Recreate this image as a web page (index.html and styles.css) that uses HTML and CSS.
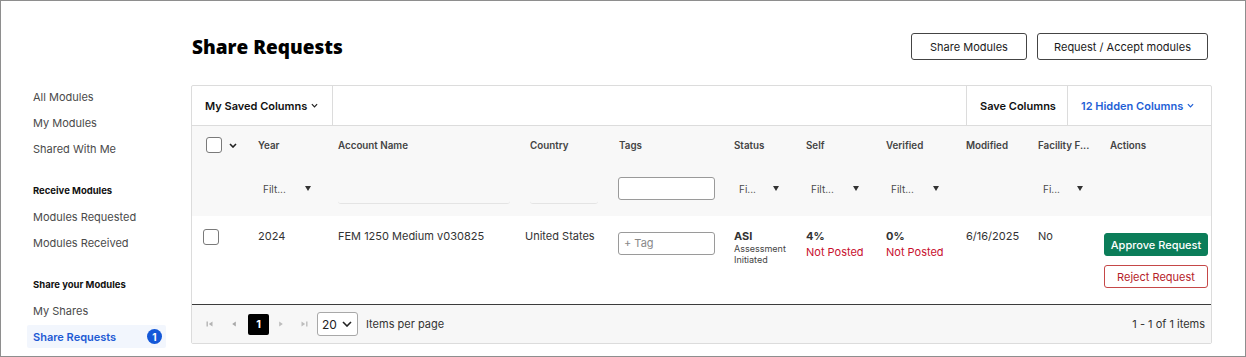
FILE: index.html
```html
<!DOCTYPE html>
<html lang="en">
<head>
<meta charset="utf-8">
<title>Share Requests</title>
<link rel="stylesheet" href="styles.css">
</head>
<body>
<div class="frame">
  <aside class="sidebar">
    <a class="nav-item">All Modules</a>
    <a class="nav-item">My Modules</a>
    <a class="nav-item">Shared With Me</a>
    <div class="nav-heading">Receive Modules</div>
    <a class="nav-item">Modules Requested</a>
    <a class="nav-item">Modules Received</a>
    <div class="nav-heading">Share your Modules</div>
    <a class="nav-item">My Shares</a>
    <a class="nav-item active">Share Requests <span class="badge">1</span></a>
  </aside>

  <main class="main">
    <header class="page-header">
      <h1 class="page-title">Share Requests</h1>
      <div class="header-actions">
        <button class="btn-outline btn-share">Share Modules</button>
        <button class="btn-outline btn-request">Request / Accept modules</button>
      </div>
    </header>

    <section class="grid-card">
      <div class="toolbar">
        <div class="tb-cell tb-saved">My Saved Columns
          <svg class="chev" viewBox="0 0 8 5" width="7" height="5"><path d="M1 1 L4 4 L7 1" fill="none" stroke="#222" stroke-width="1.4"/></svg>
        </div>
        <div class="tb-spacer"></div>
        <div class="tb-cell tb-save">Save Columns</div>
        <div class="tb-cell tb-hidden">12 Hidden Columns
          <svg class="chev" viewBox="0 0 8 5" width="7" height="5"><path d="M1 1 L4 4 L7 1" fill="none" stroke="#1f5fd6" stroke-width="1.4"/></svg>
        </div>
      </div>

      <table class="grid">
        <colgroup>
          <col class="c-sel"><col class="c-year"><col class="c-acct"><col class="c-country"><col class="c-tags"><col class="c-status"><col class="c-self"><col class="c-ver"><col class="c-mod"><col class="c-fac"><col class="c-act">
        </colgroup>
        <thead>
          <tr class="head-row">
            <th class="sel-head"><span class="checkbox"></span><svg class="chev sel-chev" viewBox="0 0 8 5" width="8" height="5"><path d="M1 1 L4 4 L7 1" fill="none" stroke="#222" stroke-width="1.6"/></svg></th>
            <th>Year</th>
            <th>Account Name</th>
            <th>Country</th>
            <th>Tags</th>
            <th>Status</th>
            <th>Self</th>
            <th>Verified</th>
            <th>Modified</th>
            <th>Facility F...</th>
            <th>Actions</th>
          </tr>
          <tr class="filter-row">
            <th></th>
            <th><div class="dd">Filt...<span class="tri"></span></div></th>
            <th><div class="line-input acct-input"></div></th>
            <th><div class="line-input country-input"></div></th>
            <th><div class="box-input tags-filter"></div></th>
            <th><div class="dd">Fi...<span class="tri"></span></div></th>
            <th><div class="dd">Filt...<span class="tri"></span></div></th>
            <th><div class="dd">Filt...<span class="tri"></span></div></th>
            <th></th>
            <th><div class="dd">Fi...<span class="tri"></span></div></th>
            <th></th>
          </tr>
        </thead>
        <tbody>
          <tr class="data-row">
            <td class="sel-cell"><span class="checkbox"></span></td>
            <td>2024</td>
            <td>FEM 1250 Medium v030825</td>
            <td class="country-cell">United States</td>
            <td class="tags-cell"><div class="box-input tag-entry">+ Tag</div></td>
            <td><div class="status-code">ASI</div><div class="status-desc">Assessment<br>Initiated</div></td>
            <td><div class="pct">4%</div><div class="not-posted">Not Posted</div></td>
            <td><div class="pct">0%</div><div class="not-posted">Not Posted</div></td>
            <td>6/16/2025</td>
            <td>No</td>
            <td class="act-cell">
              <button class="btn-approve">Approve Request</button>
              <button class="btn-reject">Reject Request</button>
            </td>
          </tr>
        </tbody>
      </table>

      <div class="pager">
        <span class="pg-btn"><svg viewBox="0 0 8 8" width="8" height="8"><rect x="0.5" y="1.5" width="1.4" height="5" fill="#b4b4b4"/><path d="M6.5 1.5 L2.8 4 L6.5 6.5 Z" fill="#b4b4b4"/></svg></span>
        <span class="pg-btn"><svg viewBox="0 0 8 8" width="8" height="8"><path d="M5.8 1.5 L2.2 4 L5.8 6.5 Z" fill="#a8a8a8"/></svg></span>
        <span class="pg-current">1</span>
        <span class="pg-btn"><svg viewBox="0 0 8 8" width="8" height="8"><path d="M2.2 1.5 L5.8 4 L2.2 6.5 Z" fill="#bdbdbd"/></svg></span>
        <span class="pg-btn pg-last"><svg viewBox="0 0 8 8" width="8" height="8"><path d="M1.5 1.5 L5.2 4 L1.5 6.5 Z" fill="#bdbdbd"/><rect x="6.1" y="1.5" width="1.4" height="5" fill="#bdbdbd"/></svg></span>
        <span class="pg-size">20 <svg viewBox="0 0 10 6" width="10" height="6"><path d="M1 1 L5 5 L9 1" fill="none" stroke="#222" stroke-width="1.6"/></svg></span>
        <span class="pg-label">Items per page</span>
        <span class="pg-info">1 - 1 of 1 items</span>
      </div>
    </section>
  </main>
</div>
</body>
</html>
```

FILE: styles.css
```css
* { box-sizing: border-box; }
html, body { margin: 0; padding: 0; background: #fff; }
body {
  font-family: Inter, "Liberation Sans", Arial, sans-serif;
  color: #333;
  font-size: 11px;
}
button { font-family: inherit; cursor: pointer; }

.frame {
  width: 1246px;
  height: 357px;
  border: 1px solid #8e8e8e;
  display: grid;
  grid-template-columns: 190px 1fr;
  overflow: hidden;
}

/* Sidebar */
.sidebar {
  display: flex;
  flex-direction: column;
  padding: 84px 0 0 26px;
}
.nav-item {
  display: flex;
  align-items: center;
  justify-content: space-between;
  width: 139px;
  height: 23px;
  margin-bottom: 3px;
  padding: 0 6px;
  font-size: 11px;
  color: #4a4a4a;
  border-radius: 2px;
}
.nav-item.active {
  background: #f2f6fd;
  color: #1d5ad4;
  font-weight: 600;
}
.badge {
  width: 15px;
  height: 15px;
  border-radius: 50%;
  background: #1458d8;
  color: #fff;
  font-size: 10px;
  font-weight: 700;
  display: flex;
  align-items: center;
  justify-content: center;
  margin-right: -2px;
}
.nav-heading {
  height: 16px;
  line-height: 16px;
  padding-left: 6px;
  font-size: 9.5px;
  font-weight: 700;
  color: #111;
  margin: 19px 0 6px;
}
.nav-item + .nav-item + .nav-heading { margin-top: 20px; }

/* Main */
.main {
  padding: 32px 33px 0 0;
  display: flex;
  flex-direction: column;
}
.page-header {
  display: flex;
  align-items: center;
  justify-content: space-between;
  height: 27px;
  margin-bottom: 25px;
  padding-right: 4px;
}
.page-title {
  margin: 0 0 0 1px;
  font-family: "Open Sans", Lato, sans-serif;
  font-weight: 800;
  font-size: 19px;
  color: #000;
}
.header-actions { display: flex; gap: 10px; }
.btn-outline {
  height: 27px;
  border: 1px solid #444;
  border-radius: 3px;
  background: #fff;
  color: #1a1a1a;
  font-size: 11px;
  padding: 0;
}
.btn-share { width: 116px; }
.btn-request { width: 171px; }

/* Card */
.grid-card {
  border: 1px solid #dcdcdc;
  border-radius: 2px;
  background: #fff;
}
.toolbar {
  display: flex;
  height: 40px;
  border-bottom: 1px solid #dcdcdc;
}
.tb-cell {
  display: flex;
  align-items: center;
  gap: 4px;
  font-size: 11px;
  font-weight: 600;
  color: #111;
}
.tb-saved {
  width: 141px;
  padding-left: 13px;
  border-right: 1px solid #dcdcdc;
}
.tb-spacer { flex: 1; }
.tb-save {
  width: 102px;
  padding-left: 13px;
  border-left: 1px solid #dcdcdc;
  border-right: 1px solid #dcdcdc;
}
.tb-hidden {
  width: 143px;
  padding-left: 13px;
  color: #1f5fd6;
}
.chev { display: block; }

/* Table */
.grid {
  width: 100%;
  border-collapse: collapse;
  table-layout: fixed;
}
.c-sel { width: 58px; }
.c-year { width: 80px; }
.c-acct { width: 192px; }
.c-country { width: 89px; }
.c-tags { width: 115px; }
.c-status { width: 72px; }
.c-self { width: 80px; }
.c-ver { width: 80px; }
.c-mod { width: 72px; }
.c-fac { width: 72px; }
.c-act { width: 109px; }

thead { background: #f8f8f8; }
.head-row th {
  height: 38px;
  padding: 0 8px;
  text-align: left;
  font-size: 9.8px;
  font-weight: 600;
  color: #444;
  white-space: nowrap;
  overflow: hidden;
  vertical-align: middle;
}
.head-row .sel-head {
  padding-left: 14px;
}
.sel-head .checkbox { vertical-align: middle; }
.sel-head .sel-chev { display: inline-block; vertical-align: middle; margin-left: 7px; }

.checkbox {
  display: inline-block;
  width: 16px;
  height: 16px;
  border: 1px solid #7a7a7a;
  border-radius: 3px;
  background: #fff;
}

.filter-row th {
  height: 52px;
  padding: 13px 8px 0;
  vertical-align: top;
  text-align: left;
  font-weight: 400;
}
.dd {
  display: flex;
  align-items: center;
  justify-content: space-between;
  height: 23px;
  padding: 0 11px 0 5px;
  font-size: 10px;
  color: #4a4a4a;
}
.tri {
  width: 0;
  height: 0;
  border-left: 3.5px solid transparent;
  border-right: 3.5px solid transparent;
  border-top: 5px solid #333;
}
.line-input {
  height: 27px;
  border-bottom: 1px solid #e4e4e4;
  border-radius: 0 0 3px 3px;
}
.acct-input { width: 172px; }
.country-input { width: 68px; }
.box-input {
  width: 97px;
  height: 23px;
  margin-left: -1px;
  border: 1px solid #9a9a9a;
  border-radius: 3px;
  background: #fff;
}

.data-row td {
  height: 88px;
  padding: 12px 8px 0;
  vertical-align: top;
  font-size: 11px;
  line-height: 16px;
  color: #333;
  white-space: nowrap;
}
.data-row .sel-cell { padding-top: 13px; padding-left: 11px; }
.data-row .country-cell { padding-left: 3px; }
.data-row .tags-cell { padding-top: 16px; }
.tag-entry {
  padding-left: 5px;
  font-size: 11px;
  line-height: 21px;
  color: #888;
}
.status-code { font-weight: 700; color: #333; }
.status-desc { font-size: 9px; line-height: 11px; color: #444; margin-top: -1px; }
.pct { font-weight: 700; color: #333; }
.not-posted { color: #c8102e; }
.data-row .act-cell {
  padding: 17px 0 0 2px;
}
.btn-approve, .btn-reject {
  display: block;
  width: 104px;
  height: 23px;
  border-radius: 3px;
  font-size: 11px;
  padding: 0;
}
.btn-approve {
  background: #0b7d59;
  border: 1px solid #0b7d59;
  color: #fff;
  font-weight: 500;
}
.btn-reject {
  margin-top: 9px;
  background: #fff;
  border: 1px solid #c54848;
  color: #b61d2a;
}

/* Pager */
.pager {
  display: flex;
  align-items: center;
  height: 39px;
  padding: 0 6px 0 6px;
  background: #f7f7f7;
  border-top: 1px solid #3c3c3c;
}
.pg-btn {
  width: 24px;
  display: flex;
  justify-content: center;
}
.pg-btn svg { display: block; }
.pg-last { width: 22px; }
.pg-current {
  width: 21px;
  height: 21px;
  margin-left: 2px;
  background: #000;
  color: #fff;
  border-radius: 2px;
  font-size: 11px;
  font-weight: 700;
  display: flex;
  align-items: center;
  justify-content: center;
}
.pg-size {
  margin-left: 2px;
  width: 41px;
  height: 24px;
  border: 1px solid #a8a8a8;
  border-radius: 3px;
  background: #fff;
  display: flex;
  align-items: center;
  justify-content: space-between;
  padding: 0 5px 0 4px;
  font-size: 12px;
  color: #222;
}
.pg-label {
  margin-left: 8px;
  font-size: 11px;
  color: #333;
}
.pg-info {
  margin-left: auto;
  font-size: 11px;
  color: #333;
}
```
